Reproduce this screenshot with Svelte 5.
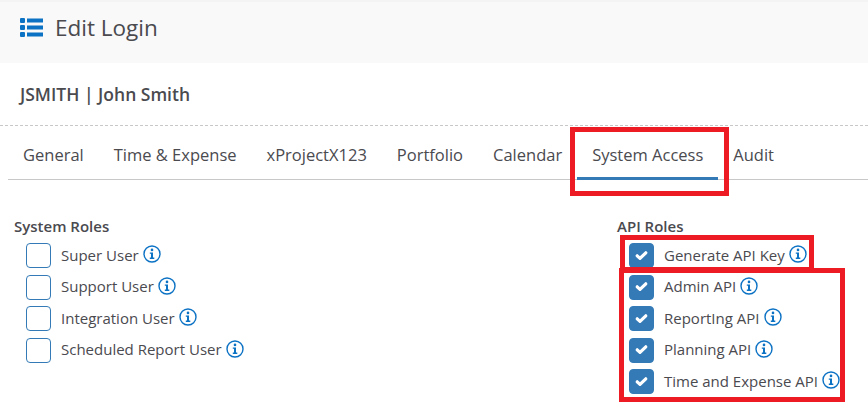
<script lang="ts">
    const tabs = ['General', 'Time & Expense', 'xProjectX123', 'Portfolio', 'Calendar', 'System Access', 'Audit'];
    const activeTab = 'System Access';

    const systemRoles = [
        { name: 'Super User', on: false },
        { name: 'Support User', on: false },
        { name: 'Integration User', on: false },
        { name: 'Scheduled Report User', on: false }
    ];

    const apiRoles = [
        { name: 'Generate API Key', on: true },
        { name: 'Admin API', on: true },
        { name: 'ReportIng API', on: true },
        { name: 'Planning API', on: true },
        { name: 'Time and Expense API', on: true }
    ];
</script>

{#snippet role(item)}
    <div class="role">
        <span class="box" class:on={item.on}>
            {#if item.on}
                <svg width="15" height="12" viewBox="0 0 15 12" aria-hidden="true">
                    <path d="M3.200 5.800 6 8.400 11.800 2.800" fill="none" stroke="#fff" stroke-width="3.2" stroke-linecap="round" stroke-linejoin="round" />
                </svg>
            {/if}
        </span>
        <span class="role-name">{item.name}</span>
        <svg class="info" width="18" height="18" viewBox="0 0 18 18" aria-hidden="true">
            <circle cx="9" cy="9" r="8" fill="none" stroke="#0c72c4" stroke-width="1.4" />
            <circle cx="9" cy="4.9" r="1.3" fill="#0c72c4" />
            <path d="M6.8 7.4H10V12.6H11.3V13.9H6.8V12.6H8V8.7H6.8Z" fill="#0c72c4" />
        </svg>
    </div>
{/snippet}

<div class="page">
    <header class="title-bar">
        <svg class="list-icon" width="23" height="19" viewBox="0 0 23 19" aria-hidden="true">
            <path d="M1 0h3a1 1 0 0 1 1 1v3a1 1 0 0 1-1 1H1a1 1 0 0 1-1-1V1a1 1 0 0 1 1-1zM1 7h3a1 1 0 0 1 1 1v3a1 1 0 0 1-1 1H1a1 1 0 0 1-1-1V8a1 1 0 0 1 1-1zM1 14h3a1 1 0 0 1 1 1v3a1 1 0 0 1-1 1H1a1 1 0 0 1-1-1v-3a1 1 0 0 1 1-1zM7 .5h16v4H7zM7 7.500h16v4H7zM7 14.500h16v4H7z" fill="#0c72c4" />
        </svg>
        <h1>Edit Login</h1>
    </header>

    <div class="user-line">JSMITH | John Smith</div>

    <nav class="tabs">
        {#each tabs as tab}
            <span class="tab" class:active={tab === activeTab}>{tab}</span>
        {/each}
    </nav>

    <section class="roles">
        <div class="col-left">
            <h2>System Roles</h2>
            {#each systemRoles as item}
                {@render role(item)}
            {/each}
        </div>
        <div class="col-right">
            <h2>API Roles</h2>
            {#each apiRoles as item}
                {@render role(item)}
            {/each}
        </div>
    </section>

    <!-- red annotation boxes drawn on top of the screenshot -->
    <div class="mark mark-tab"></div>
    <div class="mark mark-key"></div>
    <div class="mark mark-api"></div>
</div>

<style>
    :global(body) {
        margin: 0;
        background: #fff;
    }

    .page {
        position: relative;
        width: 868px;
        height: 405px;
        overflow: hidden;
        font-family: "Open Sans", sans-serif;
        color: #4a4a4f;
    }

    .title-bar {
        display: flex;
        align-items: center;
        gap: 12px;
        height: 63px;
        padding-left: 20px;
        box-sizing: border-box;
        background: #f9f9f9;
        border-top: 2px solid #f4f4f4;
    }

    .list-icon {
        margin-top: -10px;
    }

    h1 {
        margin: -10px 0 0;
        font-size: 22.5px;
        font-weight: 400;
    }

    .user-line {
        height: 63px;
        box-sizing: border-box;
        padding: 20px 0 0 20px;
        font-size: 17.5px;
        font-weight: 600;
        line-height: 23px;
        border-bottom: 1px dashed #c8c8c8;
    }

    .tabs {
        display: flex;
        height: 54px;
        box-sizing: border-box;
        margin-left: 8px;
        border-bottom: 1px solid #c8c8c8;
    }

    .tab {
        padding: 18px 15px 0;
        font-size: 16.5px;
        line-height: 22px;
        white-space: nowrap;
    }

    .tab.active {
        border-bottom: 3px solid #337ab7;
        height: 54px;
        box-sizing: border-box;
    }

    .roles {
        display: flex;
        padding: 36px 0 0 14px;
    }

    .col-left {
        width: 603px;
    }

    h2 {
        margin: 0 0 4px;
        font-size: 15px;
        font-weight: 600;
        line-height: 20px;
    }

    .role {
        display: flex;
        align-items: center;
        height: 31.5px;
        padding-left: 12px;
        font-size: 15px;
    }

    .box {
        display: flex;
        align-items: center;
        justify-content: center;
        width: 25px;
        height: 25px;
        box-sizing: border-box;
        margin-right: 10px;
        border: 1px solid #337ab7;
        border-radius: 4px;
    }

    .box.on {
        background: #337ab7;
    }

    .role-name {
        margin-top: -2px;
        margin-right: 4px;
    }

    .info {
        margin-top: -3px;
    }

    .mark {
        position: absolute;
        box-sizing: border-box;
        border: 5px solid #ed1c24;
    }

    .mark-tab {
        left: 570px;
        top: 127px;
        width: 159px;
        height: 69px;
    }

    .mark-key {
        left: 620px;
        top: 235px;
        width: 194px;
        height: 37px;
    }

    .mark-api {
        left: 619px;
        top: 268px;
        width: 226px;
        height: 134px;
    }
</style>
